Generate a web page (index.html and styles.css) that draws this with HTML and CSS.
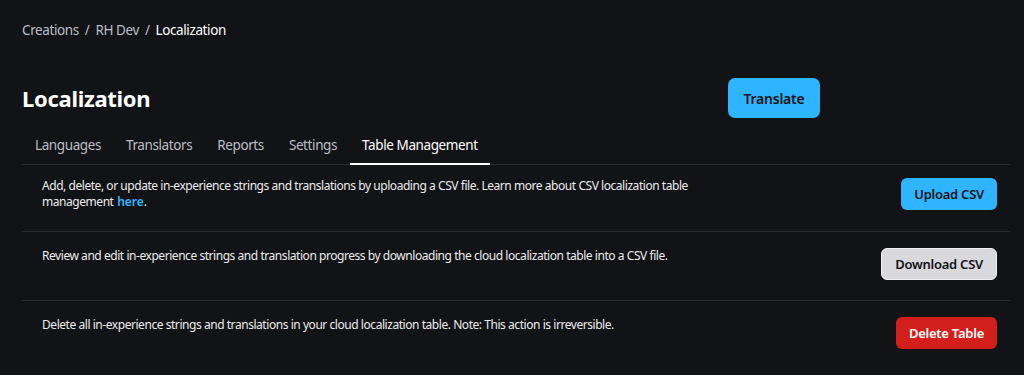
FILE: index.html
```html
<!DOCTYPE html>
<html lang="en">
<head>
  <meta charset="UTF-8" />
  <title>Localization</title>
  <link rel="stylesheet" href="styles.css">
</head>
<body>
  <div class="page">
    <nav class="breadcrumb">
      <a href="#">Creations</a>
      <span class="sep">/</span>
      <a href="#">RH Dev</a>
      <span class="sep">/</span>
      <span class="current">Localization</span>
    </nav>

    <div class="header">
      <h1>Localization</h1>
      <button class="btn btn-blue btn-large">Translate</button>
    </div>

    <div class="tabs">
      <div class="tab">Languages</div>
      <div class="tab">Translators</div>
      <div class="tab">Reports</div>
      <div class="tab">Settings</div>
      <div class="tab active">Table Management</div>
    </div>

    <div class="row first">
      <p>Add, delete, or update in-experience strings and translations by uploading a CSV file. Learn more about CSV localization table management <a href="#">here</a>.</p>
      <button class="btn btn-blue">Upload CSV</button>
    </div>
    <div class="row">
      <p>Review and edit in-experience strings and translation progress by downloading the cloud localization table into a CSV file.</p>
      <button class="btn btn-grey">Download CSV</button>
    </div>
    <div class="row last">
      <p>Delete all in-experience strings and translations in your cloud localization table. Note: This action is irreversible.</p>
      <button class="btn btn-red">Delete Table</button>
    </div>
  </div>
</body>
</html>
```

FILE: styles.css
```css
* {
  box-sizing: border-box;
}

body {
  margin: 0;
  background: #121317;
  color: #f2f2f2;
  font-family: 'Noto Sans', 'Open Sans', sans-serif;
}

.page {
  padding: 20px 14px 0 22px;
}

.breadcrumb {
  font-size: 13.5px;
  letter-spacing: -0.4px;
  line-height: 20px;
  color: #bcbec8;
  display: flex;
  gap: 6px;
}

.breadcrumb a {
  color: #bcbec8;
  text-decoration: none;
}

.breadcrumb .current {
  color: #fff;
}

.header {
  width: 798px;
  margin-top: 38px;
  height: 40px;
  display: flex;
  align-items: center;
  justify-content: space-between;
}

h1 {
  margin: 0;
  font-size: 22px;
  font-weight: 700;
  letter-spacing: -0.3px;
  color: #fff;
}

.btn {
  border: none;
  border-radius: 6px;
  font-family: inherit;
  font-size: 13px;
  font-weight: 600;
  letter-spacing: -0.25px;
  height: 32px;
  padding: 0 13px;
  color: #121317;
  cursor: pointer;
  flex-shrink: 0;
}

.btn-large {
  height: 40px;
  width: 92px;
  font-size: 14px;
  border-radius: 7px;
}

.btn-blue {
  background: #2fb4ff;
}

.btn-grey {
  background: #d9d9dc;
  border: 1px solid #f2f2f2;
}

.btn-red {
  background: #d21f1b;
  color: #fff;
}

.tabs {
  margin-top: 6px;
  display: flex;
  border-bottom: 1px solid #2c2d32;
}

.tab {
  padding: 11px 12.5px 8px;
  font-size: 13.5px;
  letter-spacing: -0.4px;
  line-height: 20px;
  color: #bdbec4;
}

.tab:first-child {
  padding-left: 13px;
}

.tab.active {
  color: #fff;
  border-bottom: 2px solid #fff;
  margin-bottom: -1px;
}

.row {
  display: flex;
  justify-content: space-between;
  align-items: flex-start;
  gap: 40px;
  padding: 16px 13px 20px 20px;
  border-bottom: 1px solid #2c2d32;
}

.row.first {
  padding-top: 13px;
  padding-bottom: 21px;
}

.row.last {
  border-bottom: none;
}

.row p {
  margin: 0;
  max-width: 690px;
  font-size: 12px;
  letter-spacing: -0.45px;
  line-height: 16px;
  color: #ececec;
}

.row a {
  color: #33b5ff;
  font-weight: 600;
  letter-spacing: 0;
  margin-left: 1px;
  text-decoration: none;
}
```
